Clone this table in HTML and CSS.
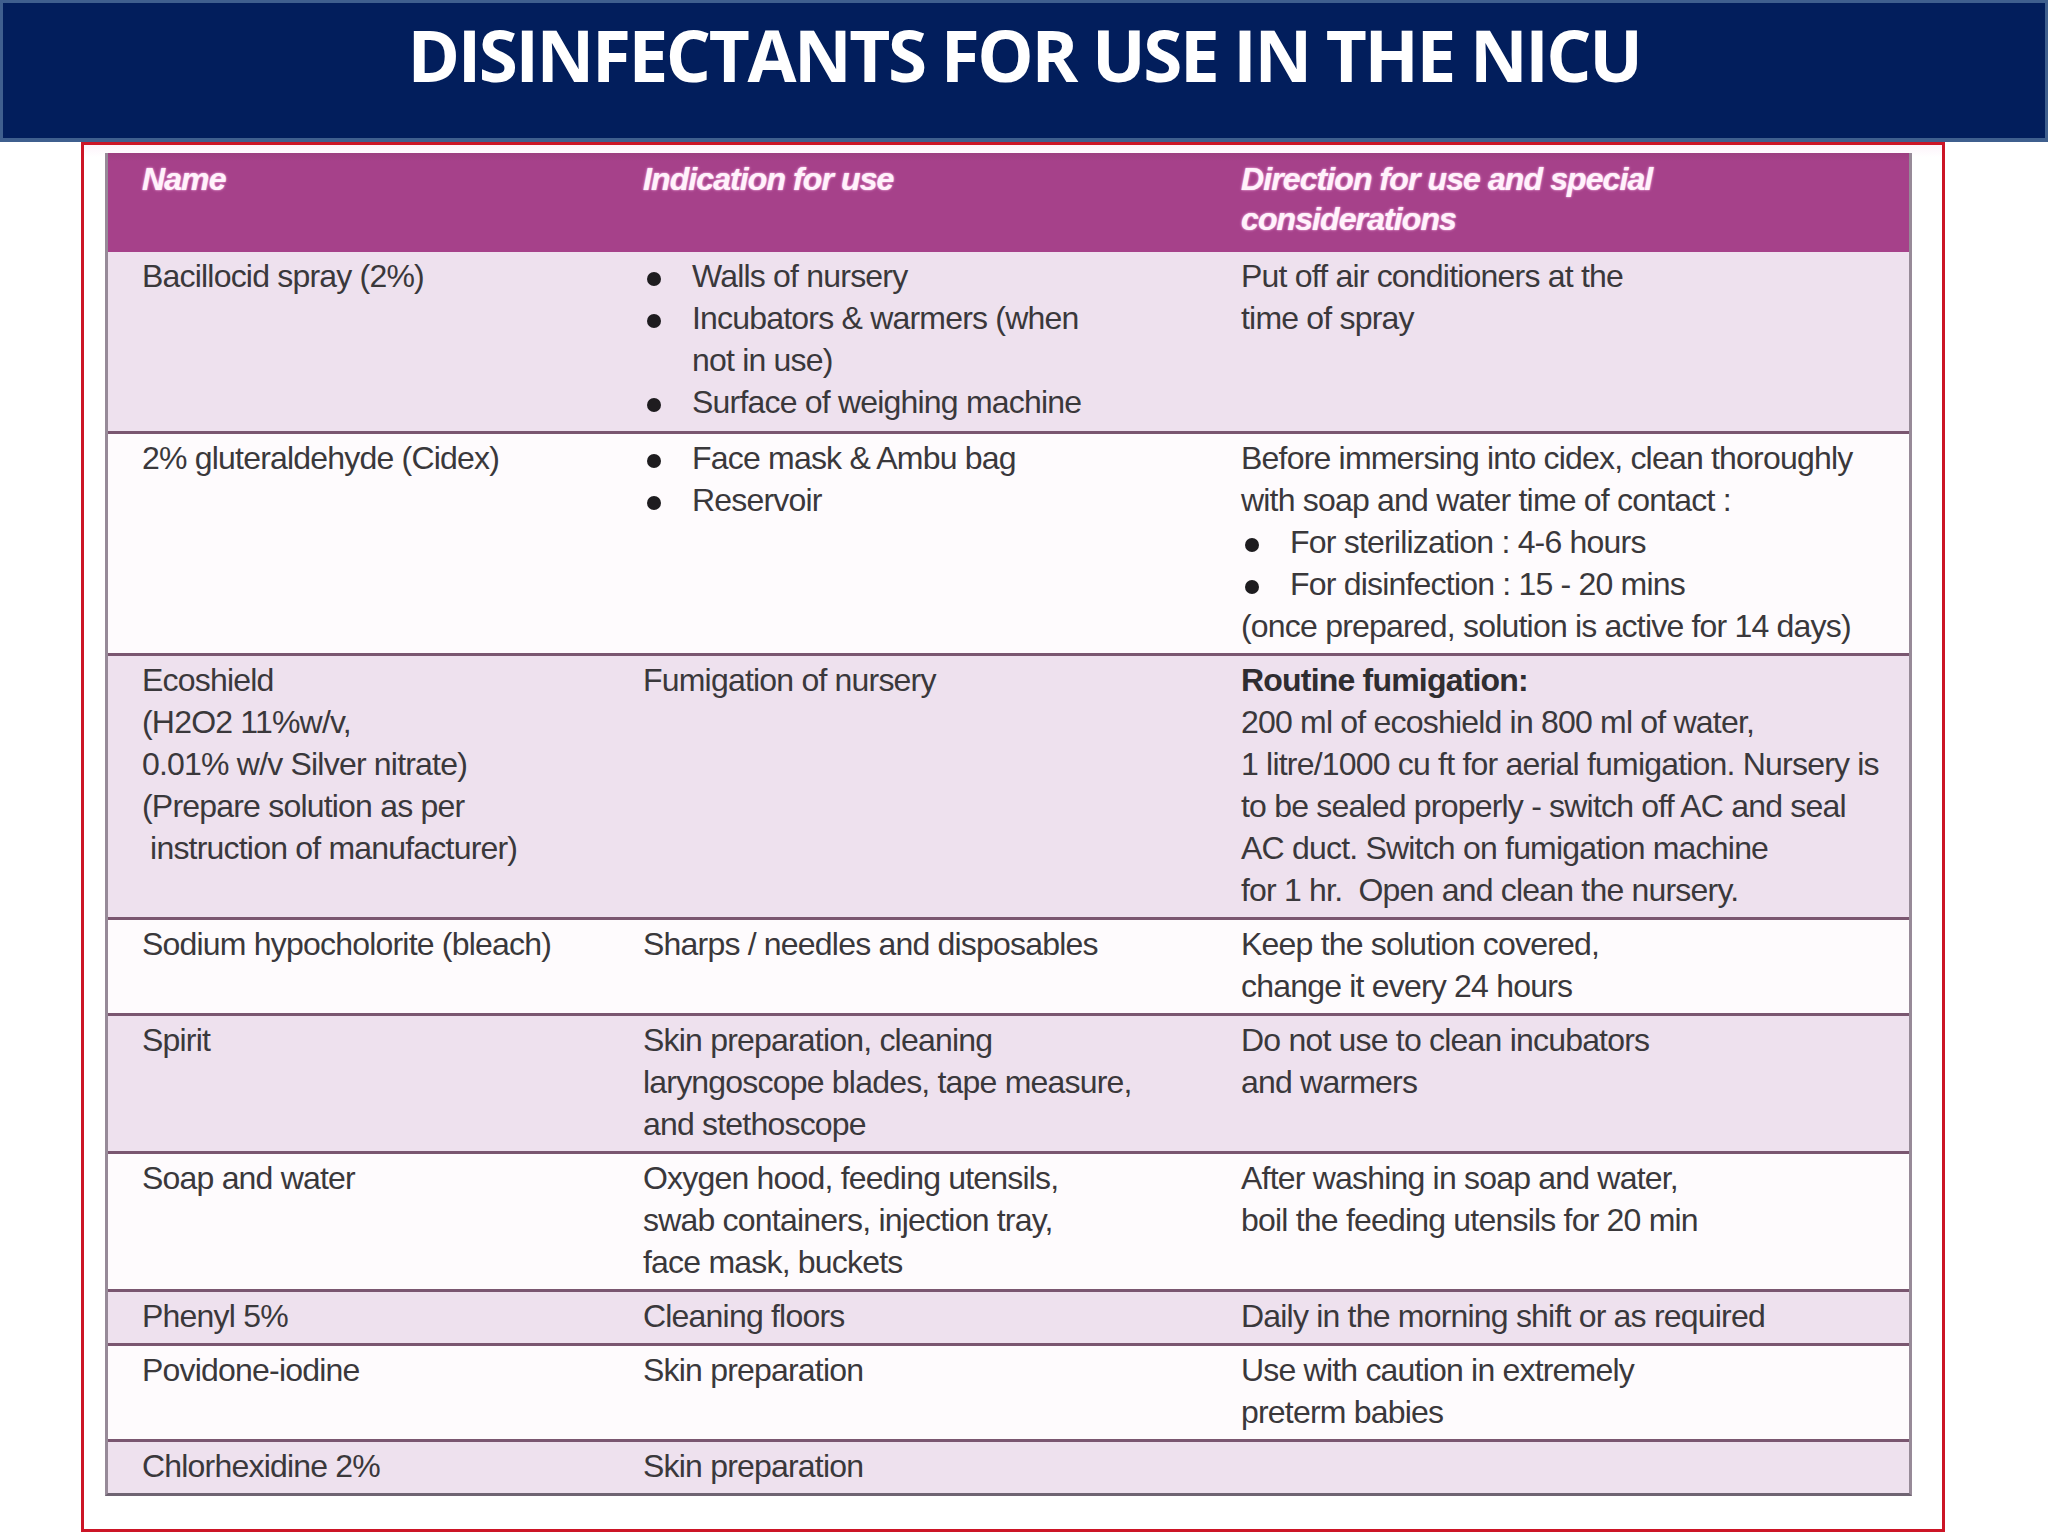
FILE: index.html
```html
<!DOCTYPE html>
<html lang="en">
<head>
<meta charset="utf-8">
<title>Disinfectants for use in the NICU</title>
<link rel="stylesheet" href="styles.css">
</head>
<body>
<header class="title-bar">
  <h1 class="title">DISINFECTANTS FOR USE IN THE NICU</h1>
</header>
<main class="frame">
  <table class="disinfectants">
    <colgroup>
      <col class="c-name">
      <col class="c-ind">
      <col class="c-dir">
    </colgroup>
    <thead>
      <tr>
        <th>Name</th>
        <th>Indication for use</th>
        <th>Direction for use and special<br>considerations</th>
      </tr>
    </thead>
    <tbody>
      <tr class="pink first">
        <td>Bacillocid spray (2%)</td>
        <td>
          <ul class="bullets">
            <li><span>Walls of nursery</span></li>
            <li><span>Incubators &amp; warmers (when<br>not in use)</span></li>
            <li><span>Surface of weighing machine</span></li>
          </ul>
        </td>
        <td>Put off air conditioners at the<br>time of spray</td>
      </tr>
      <tr class="white">
        <td>2% gluteraldehyde (Cidex)</td>
        <td>
          <ul class="bullets">
            <li><span>Face mask &amp; Ambu bag</span></li>
            <li><span>Reservoir</span></li>
          </ul>
        </td>
        <td>Before immersing into cidex, clean thoroughly<br>with soap and water time of contact :
          <ul class="bullets">
            <li><span>For sterilization : 4-6 hours</span></li>
            <li><span>For disinfection : 15 - 20 mins</span></li>
          </ul>
          (once prepared, solution is active for 14 days)
        </td>
      </tr>
      <tr class="pink">
        <td>Ecoshield<br>(H2O2 11%w/v,<br>0.01% w/v Silver nitrate)<br>(Prepare solution as per<br>&nbsp;instruction of manufacturer)</td>
        <td>Fumigation of nursery</td>
        <td><strong class="sub">Routine fumigation:</strong><br>200 ml of ecoshield in 800 ml of water,<br>1 litre/1000 cu ft for aerial fumigation. Nursery is<br>to be sealed properly - switch off AC and seal<br>AC duct. Switch on fumigation machine<br>for 1 hr.&nbsp; Open and clean the nursery.</td>
      </tr>
      <tr class="white">
        <td>Sodium hypocholorite (bleach)</td>
        <td>Sharps / needles and disposables</td>
        <td>Keep the solution covered,<br>change it every 24 hours</td>
      </tr>
      <tr class="pink">
        <td>Spirit</td>
        <td>Skin preparation, cleaning<br>laryngoscope blades, tape measure,<br>and stethoscope</td>
        <td>Do not use to clean incubators<br>and warmers</td>
      </tr>
      <tr class="white">
        <td>Soap and water</td>
        <td>Oxygen hood, feeding utensils,<br>swab containers, injection tray,<br>face mask, buckets</td>
        <td>After washing in soap and water,<br>boil the feeding utensils for 20 min</td>
      </tr>
      <tr class="pink">
        <td>Phenyl 5%</td>
        <td>Cleaning floors</td>
        <td>Daily in the morning shift or as required</td>
      </tr>
      <tr class="white">
        <td>Povidone-iodine</td>
        <td>Skin preparation</td>
        <td>Use with caution in extremely<br>preterm babies</td>
      </tr>
      <tr class="pink last">
        <td>Chlorhexidine 2%</td>
        <td>Skin preparation</td>
        <td></td>
      </tr>
    </tbody>
  </table>
</main>
</body>
</html>
```

FILE: styles.css
```css
html, body {
  margin: 0;
  padding: 0;
  background: #ffffff;
}

body {
  width: 2048px;
  height: 1536px;
  overflow: hidden;
}

.title-bar {
  box-sizing: border-box;
  height: 142px;
  background: #021e5c;
  border: 3px solid #3f5f8e;
  border-bottom-width: 4px;
  display: flex;
  justify-content: center;
  align-items: flex-start;
}

.title {
  margin: 7px 0 0 0;
  font-family: "Open Sans", "Liberation Sans", sans-serif;
  font-weight: 700;
  font-size: 71px;
  line-height: 90px;
  letter-spacing: -2.4px;
  color: #ffffff;
  white-space: nowrap;
}

.frame {
  box-sizing: border-box;
  display: block;
  margin-left: 81px;
  width: 1864px;
  height: 1390px;
  border: 3px solid #cc1526;
  padding: 8px 0 0 21px;
  background: linear-gradient(#fdf3fa, #ffffff 12px);
}

.disinfectants {
  width: 1807px;
  table-layout: fixed;
  border-collapse: separate;
  border-spacing: 0;
  border-left: 3px solid #978a98;
  border-right: 3px solid #978a98;
  border-bottom: 3px solid #6f6472;
  font-family: "Liberation Sans", Arial, sans-serif;
  font-size: 32px;
  line-height: 42px;
  letter-spacing: -0.8px;
  color: #3a383b;
}

.c-name { width: 498px; }
.c-ind { width: 598px; }
.c-dir { width: 705px; }

.disinfectants th {
  background: linear-gradient(#9c3f80, #a6418a 8px, #a6418a);
  color: #fff2fb;
  text-shadow: 0 0 3px #f2a6dc, 0 0 1px #ffd8f2;
  font-weight: 700;
  font-style: italic;
  text-align: left;
  vertical-align: top;
  line-height: 40px;
  letter-spacing: -0.9px;
  padding: 6px 20px 13px 37px;
  white-space: nowrap;
}

.disinfectants th:first-child,
.disinfectants td:first-child {
  padding-left: 34px;
}

.disinfectants td {
  vertical-align: top;
  padding: 3px 10px 6px 37px;
  border-top: 3px solid #7a5670;
  white-space: nowrap;
}

.disinfectants tr.first td {
  border-top: none;
  padding-top: 3px;
  padding-bottom: 8px;
}

tr.pink td { background: #eee1ee; }
tr.white td { background: #fefbfd; }

.sub {
  font-weight: 700;
  color: #2f2d30;
}

.bullets {
  list-style: none;
  margin: 0;
  padding: 0;
}

.bullets li {
  display: flex;
  align-items: flex-start;
}

.bullets li::before {
  content: "";
  flex: none;
  width: 14px;
  height: 14px;
  border-radius: 50%;
  background: #1e1c1f;
  margin: 17px 31px 0 4px;
}
```
